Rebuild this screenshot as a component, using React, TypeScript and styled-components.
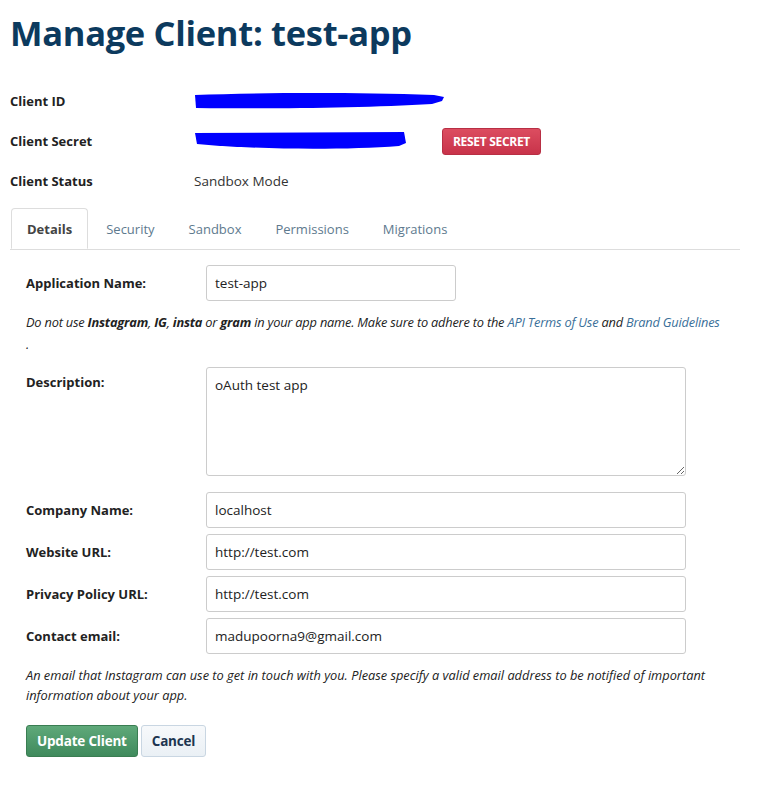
import React from "react";
import styled, { createGlobalStyle } from "styled-components";

const GlobalStyle = createGlobalStyle`
  body {
    margin: 0;
    background: #ffffff;
    font-family: "Open Sans", "Noto Sans", sans-serif;
    color: #222222;
  }
`;

const Page = styled.div`
  width: 730px;
  padding: 10px 0 0 10px;
`;

const Title = styled.h1`
  margin: 0 0 25px;
  font-size: 34.5px;
  line-height: 46px;
  font-weight: 700;
  color: #0c3a5e;
  letter-spacing: -0.3px;
`;

const InfoTable = styled.div`
  display: grid;
  grid-template-columns: 184px auto;
  grid-auto-rows: 40px;
  align-items: center;
`;

const InfoLabel = styled.div`
  font-weight: 700;
  font-size: 13px;
  color: #222;
`;

const InfoValue = styled.div`
  display: flex;
  align-items: center;
  gap: 8px;
  font-size: 13.5px;
  color: #333;
`;

const Scribble = styled.svg`
  display: block;
`;

const DangerButton = styled.button`
  height: 27px;
  padding: 0 10px;
  border: 1px solid #b82f44;
  border-radius: 3px;
  background: linear-gradient(#dc4d60, #c8334a);
  color: #fff;
  font-family: inherit;
  font-weight: 700;
  font-size: 12px;
  letter-spacing: -0.3px;
`;

const Tabs = styled.div`
  display: flex;
  margin-top: 7px;
  border-bottom: 1px solid #dddddd;
  height: 41px;
`;

const Tab = styled.div<{ $active?: boolean }>`
  padding: 0 15px;
  height: 41px;
  margin-left: ${(p) => (p.$active ? "1px" : "2px")};
  display: flex;
  align-items: center;
  font-size: 13px;
  color: ${(p) => (p.$active ? "#444" : "#5e7a8e")};
  font-weight: ${(p) => (p.$active ? 700 : 400)};
  border: 1px solid ${(p) => (p.$active ? "#dddddd" : "transparent")};
  border-bottom-color: ${(p) => (p.$active ? "#fff" : "transparent")};
  border-radius: 4px 4px 0 0;
  background: #fff;
  box-sizing: border-box;
  margin-bottom: -1px;
`;

const Form = styled.div`
  padding: 15px 16px 0;
  display: flex;
  flex-direction: column;
`;

const Row = styled.div<{ $top?: boolean; $mb?: number }>`
  display: grid;
  grid-template-columns: 180px 480px;
  align-items: ${(p) => (p.$top ? "start" : "center")};
  margin-bottom: ${(p) => p.$mb ?? 6}px;
`;

const Label = styled.label<{ $top?: boolean }>`
  font-weight: 700;
  font-size: 13px;
  color: #222;
  padding-top: ${(p) => (p.$top ? "6px" : "0")};
`;

const Input = styled.input<{ $w?: number }>`
  box-sizing: border-box;
  display: block;
  height: 36px;
  width: ${(p) => (p.$w ? `${p.$w}px` : "100%")};
  border: 1px solid #cccccc;
  border-radius: 3px;
  padding: 0 8px;
  font-family: inherit;
  font-size: 13.5px;
  color: #222;
`;

const TextArea = styled.textarea`
  box-sizing: border-box;
  display: block;
  height: 109px;
  width: 100%;
  border: 1px solid #cccccc;
  border-radius: 3px;
  padding: 8px 8px;
  font-family: inherit;
  font-size: 13.5px;
  color: #222;
  resize: vertical;
`;

const Help = styled.p<{ $mb?: number; $lh?: number; $tight?: boolean }>`
  margin: 0 0 ${(p) => p.$mb ?? 0}px;
  font-style: italic;
  font-size: 12.8px;
  line-height: ${(p) => p.$lh ?? 20}px;
  letter-spacing: ${(p) => (p.$tight ? "-0.2px" : "0")};
  color: #222;
`;

const Link = styled.a`
  color: #3a6f99;
  text-decoration: none;
`;

const Actions = styled.div`
  display: flex;
  gap: 3px;
  margin-top: 20px;
`;

const Button = styled.button<{ $primary?: boolean }>`
  height: 32px;
  padding: 0 10px;
  border-radius: 3px;
  font-family: inherit;
  font-weight: 700;
  font-size: 13.5px;
  color: ${(p) => (p.$primary ? "#fff" : "#1d3550")};
  border: 1px solid ${(p) => (p.$primary ? "#3a7d52" : "#c9d6e2")};
  background: ${(p) =>
    p.$primary
      ? "linear-gradient(#5fa97a, #3f8a5c)"
      : "linear-gradient(#f7f9fb, #eaf0f5)"};
  letter-spacing: -0.2px;
`;

const Redacted: React.FC<{ w: number; h: number; d: string }> = ({ w, h, d }) => (
  <Scribble width={w} height={h} viewBox={`0 0 ${w} ${h}`}>
    <path d={d} fill="#0000ff" />
  </Scribble>
);

export default function App() {
  return (
    <Page>
      <GlobalStyle />
      <Title>Manage Client: test-app</Title>
      <InfoTable>
        <InfoLabel>Client ID</InfoLabel>
        <InfoValue>
          <Redacted
            w={252}
            h={20}
            d="M1 4 C60 2 150 1 240 4 L250 6 L248 10 L238 13 C170 17 80 18 2 17 Z"
          />
        </InfoValue>
        <InfoLabel>Client Secret</InfoLabel>
        <InfoValue>
          <Redacted
            w={240}
            h={22}
            d="M1 3 L210 2 L212 13 L205 16 C150 20 70 20 3 14 Z"
          />
          <DangerButton>RESET SECRET</DangerButton>
        </InfoValue>
        <InfoLabel>Client Status</InfoLabel>
        <InfoValue>Sandbox Mode</InfoValue>
      </InfoTable>

      <Tabs>
        <Tab $active>Details</Tab>
        <Tab>Security</Tab>
        <Tab>Sandbox</Tab>
        <Tab>Permissions</Tab>
        <Tab>Migrations</Tab>
      </Tabs>

      <Form>
        <Row $mb={10}>
          <Label>Application Name:</Label>
          <Input $w={250} defaultValue="test-app" />
        </Row>
        <Help $mb={12} $lh={22} $tight>
          Do not use <b>Instagram</b>, <b>IG</b>, <b>insta</b> or <b>gram</b> in
          your app name. Make sure to adhere to the{" "}
          <Link>API Terms of Use</Link> and <Link>Brand Guidelines</Link>
          <br />.
        </Help>
        <Row $top $mb={16}>
          <Label $top>Description:</Label>
          <TextArea defaultValue="oAuth test app" />
        </Row>
        <Row>
          <Label>Company Name:</Label>
          <Input defaultValue="localhost" />
        </Row>
        <Row>
          <Label>Website URL:</Label>
          <Input defaultValue="http://test.com" />
        </Row>
        <Row>
          <Label>Privacy Policy URL:</Label>
          <Input defaultValue="http://test.com" />
        </Row>
        <Row $mb={11}>
          <Label>Contact email:</Label>
          <Input defaultValue="madupoorna9@gmail.com" />
        </Row>
        <Help>
          An email that Instagram can use to get in touch with you. Please
          specify a valid email address to be notified of important information
          about your app.
        </Help>
        <Actions>
          <Button $primary>Update Client</Button>
          <Button>Cancel</Button>
        </Actions>
      </Form>
    </Page>
  );
}
